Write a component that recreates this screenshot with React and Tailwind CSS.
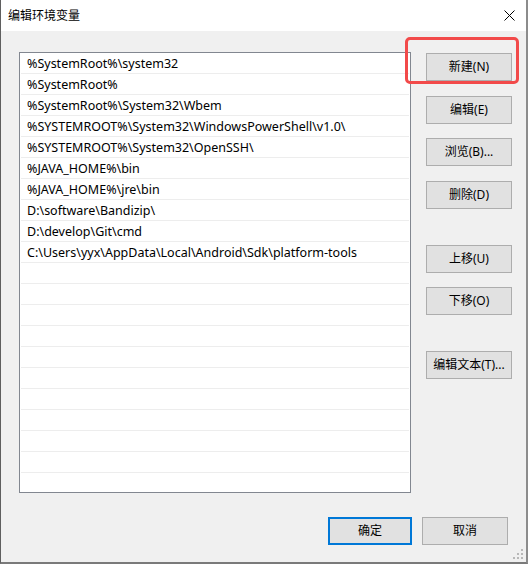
const PATHS = [
  "%SystemRoot%\\system32",
  "%SystemRoot%",
  "%SystemRoot%\\System32\\Wbem",
  "%SYSTEMROOT%\\System32\\WindowsPowerShell\\v1.0\\",
  "%SYSTEMROOT%\\System32\\OpenSSH\\",
  "%JAVA_HOME%\\bin",
  "%JAVA_HOME%\\jre\\bin",
  "D:\\software\\Bandizip\\",
  "D:\\develop\\Git\\cmd",
  "C:\\Users\\yyx\\AppData\\Local\\Android\\Sdk\\platform-tools",
];

const FONT = { fontFamily: '"Noto Sans", "Noto Sans CJK SC", sans-serif' };

function Btn({ children, className = "" }) {
  return (
    <div
      className={
        "h-[28px] w-[86px] flex items-center justify-center bg-[#e1e1e1] border border-[#adadad] text-[12px] text-black " +
        className
      }
    >
      {children}
    </div>
  );
}

export default function App() {
  const rows = [...PATHS, ...Array(11).fill("")];

  return (
    <div
      className="relative w-[528px] h-[564px] overflow-hidden bg-[#f0f0f0] border-l border-l-[#5f5f5f] border-r-2 border-r-[#8c8c8c] border-b-2 border-b-[#7a7a7a] flex flex-col"
      style={FONT}
    >
      {/* title bar */}
      <div className="h-[31px] shrink-0 bg-white flex items-center justify-between pl-[7px] pr-[10px]">
        <span className="text-[12px] text-black">编辑环境变量</span>
        <svg width="11" height="11" viewBox="0 0 11 11" className="mr-[1px]">
          <path d="M0.5 0.5 L10.5 10.5 M10.5 0.5 L0.5 10.5" stroke="#000" strokeWidth="1" />
        </svg>
      </div>

      {/* body */}
      <div className="flex pl-[18px] pt-[21px]">
        <div className="w-[392px] h-[441px] bg-white border border-[#828790] overflow-hidden">
          {rows.map((p, i) => (
            <div
              key={i}
              className="h-[21px] mx-[1px] border-b border-[#ededed] pl-[6px] pt-[3px] flex items-center text-[12.5px] text-black whitespace-nowrap"
            >
              {p}
            </div>
          ))}
        </div>

        <div className="ml-[15px] pt-[1px] flex flex-col">
          <Btn>新建(N)</Btn>
          <Btn className="mt-[15px]">编辑(E)</Btn>
          <Btn className="mt-[14px]">浏览(B)...</Btn>
          <Btn className="mt-[15px]">删除(D)</Btn>
          <Btn className="mt-[36px]">上移(U)</Btn>
          <Btn className="mt-[14px]">下移(O)</Btn>
          <Btn className="mt-[36px]">编辑文本(T)...</Btn>
        </div>
      </div>

      {/* footer */}
      <div className="flex justify-end gap-[10px] pr-[18px] mt-[24px]">
        <div className="h-[28px] w-[84px] flex items-center justify-center bg-[#e1e1e1] border-2 border-[#0078d7] text-[12px] text-black">
          确定
        </div>
        <Btn className="w-[85px]">取消</Btn>
      </div>

      {/* highlight around 新建 */}
      <div className="absolute left-[404px] top-[37px] w-[114px] h-[47px] border-[3px] border-[#f24a4a] rounded-[5px]" />

      {/* resize grip */}
      <svg width="12" height="12" viewBox="0 0 12 12" className="absolute right-[2px] bottom-[2px]">
        {[
          [9, 1],
          [9, 5],
          [5, 5],
          [9, 9],
          [5, 9],
          [1, 9],
        ].map(([x, y], i) => (
          <rect key={i} x={x} y={y} width="2" height="2" fill="#b8b8b8" />
        ))}
      </svg>
    </div>
  );
}
